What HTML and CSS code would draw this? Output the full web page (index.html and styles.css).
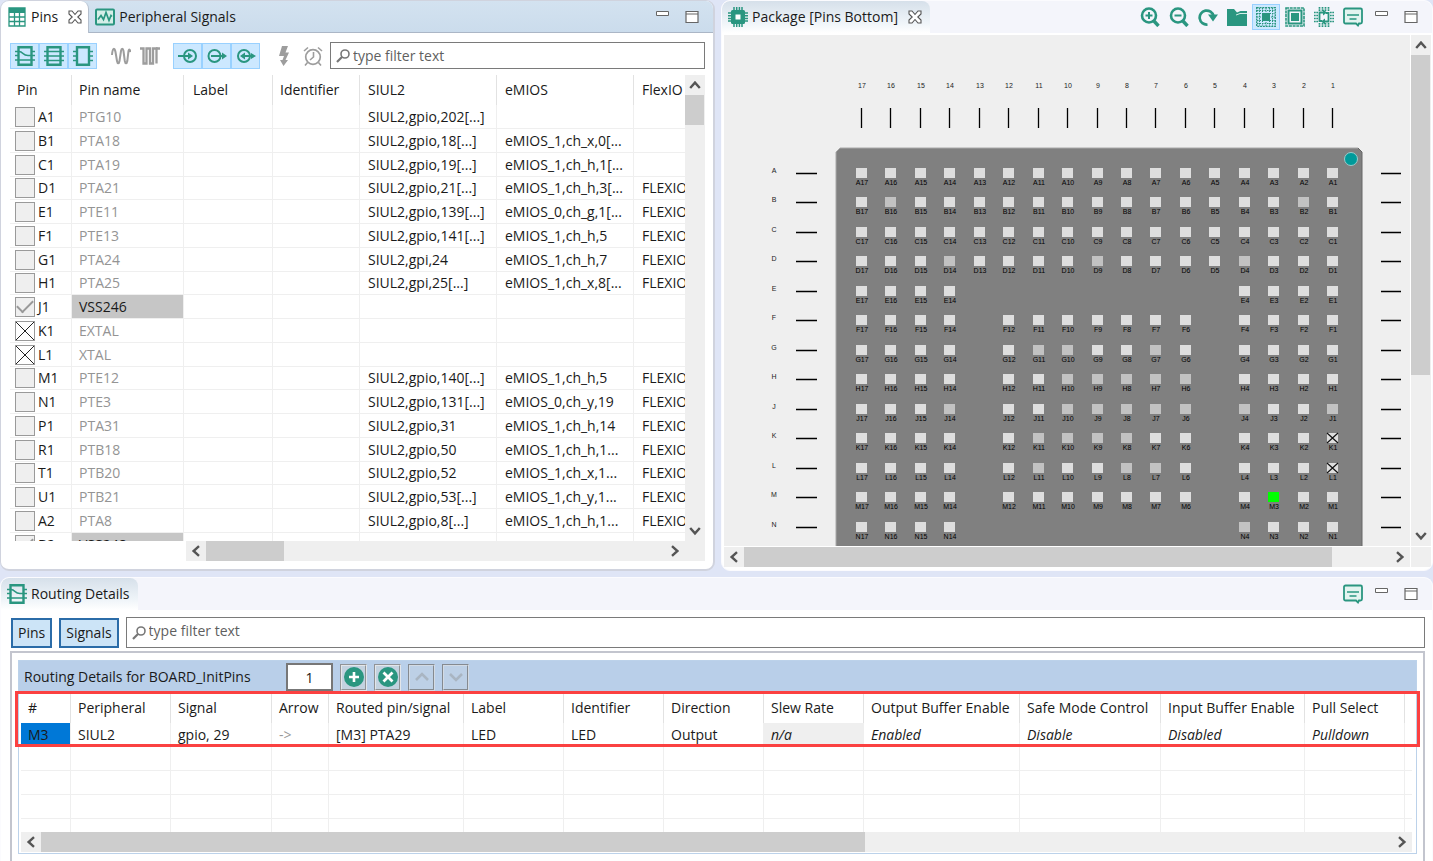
FILE: index.html
```html
<!DOCTYPE html>
<html lang="en">
<head>
<meta charset="utf-8">
<title>Pins</title>
<link rel="stylesheet" href="styles.css">
</head>
<body>
<svg class="sprite" aria-hidden="true">
  <symbol id="i-table" viewBox="0 0 18 20"><path d="M1 1h16v5H1z" fill="currentColor"/><path d="M1 1h16v18H1zM1 10h16M1 14.500h16M6.500 6v13M11.500 6v13" fill="none" stroke="currentColor" stroke-width="1.300"/></symbol>
  <symbol id="i-close" viewBox="0 0 14 14"><path d="M1 1h3l3 3.500L10 1h3v3L9.800 7 13 10v3h-3L7 9.500 4 13H1v-3l3.200-3L1 4z" fill="#fff" stroke="#555" stroke-width="1.100"/></symbol>
  <symbol id="i-wave" viewBox="0 0 20 17"><rect x="1" y="1" width="18" height="15" rx="1" fill="#d5eee8" stroke="currentColor" stroke-width="2"/><path d="M3 11l3-4 2.500 4L11 4l3 8 2-5 1 1" fill="none" stroke="currentColor" stroke-width="1.700"/></symbol>
  <symbol id="i-route" viewBox="0 0 20 20"><path d="M3.500 1.200h13v17.600h-13z" fill="none" stroke="currentColor" stroke-width="2.400"/><path d="M0 5.500h4q2 0 4 2T13 9.500h7M0 9.500h3M17 5.500h3M0 14h20" fill="none" stroke="currentColor" stroke-width="1.700"/></symbol>
  <symbol id="i-rows" viewBox="0 0 20 20"><path d="M3.500 1.200h13v17.600h-13z" fill="none" stroke="currentColor" stroke-width="2.400"/><path d="M0 5.500h20M0 10h3M17 10h3M3 10h14M0 14.500h20" fill="none" stroke="currentColor" stroke-width="1.500"/></symbol>
  <symbol id="i-chipbox" viewBox="0 0 20 20"><path d="M4 1.200h12v17.600H4z" fill="none" stroke="currentColor" stroke-width="2.400"/><path d="M0 5.500h3M0 10h3M0 14.500h3M17 5.500h3M17 10h3M17 14.500h3" stroke="currentColor" stroke-width="1.700"/></symbol>
  <symbol id="i-sine" viewBox="0 0 20 20"><path d="M1 9C1.500 2 3.500 1 4.500 6l1.500 9c.5 3 2 3 2.500 0L10 5c.5-3 2-3 2.500 0l1.300 10c.5 3 2 3 2.500 0L17.500 5C18 3 19 3 19.500 6" fill="none" stroke="currentColor" stroke-width="2"/></symbol>
  <symbol id="i-square" viewBox="0 0 20 20"><path d="M0 2.500h3.500v15h3v-15h3.500v15h3v-15h3.500v15" fill="none" stroke="currentColor" stroke-width="2.300"/><path d="M16 2.500h4" stroke="currentColor" stroke-width="2.300"/></symbol>
  <symbol id="i-in" viewBox="0 0 20 16"><circle cx="12" cy="8" r="6" fill="none" stroke="currentColor" stroke-width="2"/><path d="M0 8h12" stroke="currentColor" stroke-width="2"/><path d="M10 4.500l5 3.500-5 3.500z" fill="currentColor"/></symbol>
  <symbol id="i-out" viewBox="0 0 20 16"><circle cx="7.500" cy="8" r="6" fill="none" stroke="currentColor" stroke-width="2"/><path d="M4 8h13" stroke="currentColor" stroke-width="2"/><path d="M15 4.500l5 3.500-5 3.500z" fill="currentColor"/></symbol>
  <symbol id="i-inout" viewBox="0 0 20 16"><circle cx="8" cy="8" r="6" fill="none" stroke="currentColor" stroke-width="2"/><path d="M6 8h12" stroke="currentColor" stroke-width="2"/><path d="M15 5l5 3-5 3zM9 4.500L4 8l5 3.500z" fill="currentColor"/></symbol>
  <symbol id="i-flash" viewBox="0 0 12 20"><path d="M4 0h6L7.500 6.500H11L7.500 14H10l-4.500 6L2 14h2.500l1.500-4H1z" fill="currentColor"/></symbol>
  <symbol id="i-clock" viewBox="0 0 20 20"><circle cx="10" cy="11" r="7.300" fill="none" stroke="currentColor" stroke-width="1.700"/><path d="M10.500 6v5L7 14M1 5l4-3.500M19 5l-4-3.500M4.500 16.500L2 19.500M15.500 16.500l2.500 3" fill="none" stroke="currentColor" stroke-width="1.600"/></symbol>
  <symbol id="i-search" viewBox="0 0 14 14"><circle cx="9" cy="5" r="4" fill="none" stroke="currentColor" stroke-width="1.600"/><path d="M6.200 7.800L1 13" stroke="currentColor" stroke-width="2.200"/></symbol>
  <symbol id="i-min" viewBox="0 0 14 14"><path d="M.5 1.500h12v4H.5z" fill="#fff" stroke="#666"/></symbol>
  <symbol id="i-max" viewBox="0 0 14 14"><path d="M1 1.500h12v11H1zM1 4h12" fill="#fff" stroke="#666" stroke-width="1.200"/></symbol>
  <symbol id="i-chip" viewBox="0 0 20 20"><path d="M6 0v20M8.700 0v20M11.400 0v20M14 0v20M0 6h20M0 8.700h20M0 11.400h20M0 14h20" stroke="currentColor" stroke-width="1.500"/><rect x="3" y="3" width="14" height="14" rx="1.500" fill="currentColor"/><rect x="7.500" y="7.500" width="5" height="5" fill="#fff"/></symbol>
  <symbol id="i-zin" viewBox="0 0 20 20"><circle cx="9" cy="8.500" r="7" fill="none" stroke="currentColor" stroke-width="2.600"/><path d="M9 5v7M5.500 8.500h7" stroke="currentColor" stroke-width="2"/><path d="M13.500 13.500l5 5.500" stroke="currentColor" stroke-width="3.400"/></symbol>
  <symbol id="i-zout" viewBox="0 0 20 20"><circle cx="9" cy="8.500" r="7" fill="none" stroke="currentColor" stroke-width="2.600"/><path d="M5.500 8.500h7" stroke="currentColor" stroke-width="2"/><path d="M13.500 13.500l5 5.500" stroke="currentColor" stroke-width="3.400"/></symbol>
  <symbol id="i-rotate" viewBox="0 0 20 20"><path d="M9.500 17.500A7 7 0 1 1 15.500 9" fill="none" stroke="currentColor" stroke-width="2.700"/><path d="M10 7.500h10l-5 7z" fill="currentColor"/></symbol>
  <symbol id="i-folder" viewBox="0 0 20 20"><path d="M0 2h7l3 3.500 3.500-1.500H20v15H0z" fill="currentColor"/><path d="M9 8l4-1.500h7" fill="none" stroke="#d5eee8" stroke-width="1"/></symbol>
  <symbol id="i-bga" viewBox="0 0 20 20"><path d="M.7.7h18.600v18.600H.7z" fill="none" stroke="currentColor" stroke-width="1.300" stroke-dasharray="2 .8"/><path d="M3.500 1v18M16.500 1v18M1 3.500h18M1 16.500h18M10 1v4M10 15v4M1 10h4M15 10h4M6.500 1v18M13.500 1v18M1 6.500h18M1 13.500h18" fill="none" stroke="currentColor" stroke-width="1" stroke-dasharray="1.500 1"/><path d="M6 6h8v8H6z" fill="currentColor"/></symbol>
  <symbol id="i-pkg" viewBox="0 0 20 20"><path d="M1 1h18v18H1z" fill="none" stroke="currentColor" stroke-width="1.600" stroke-dasharray="3 .7"/><path d="M3.500 3.500h13v13h-13z" fill="none" stroke="currentColor" stroke-width="2"/><path d="M6 6h8v8H6z" fill="currentColor"/></symbol>
  <symbol id="i-dotchip" viewBox="0 0 20 20"><path d="M5.500 0v4M8.500 0v4M11.500 0v4M14.500 0v4M5.500 16v4M8.500 16v4M11.500 16v4M14.500 16v4M0 5.500h4M0 8.500h4M0 11.500h4M0 14.500h4M16 5.500h4M16 8.500h4M16 11.500h4M16 14.500h4" stroke="currentColor" stroke-width="1.700" stroke-dasharray="1.700 .6"/><path d="M10 5.500H5.500V14H8M10 14.500h4.500V6H12" fill="none" stroke="currentColor" stroke-width="1.800"/><path d="M9 2.500l4 3-4 3zM11 11.500l-4 3 4 3z" fill="currentColor"/></symbol>
  <symbol id="i-note" viewBox="0 0 20 19"><path d="M2.500 1h15A1.500 1.500 0 0 1 19 2.500v12A1.500 1.500 0 0 1 17.500 16H16l-1 2-2-2H2.500A1.500 1.500 0 0 1 1 14.500v-12A1.500 1.500 0 0 1 2.500 1z" fill="#e3f4f0" stroke="currentColor" stroke-width="1.800"/><path d="M4 7.500h12M6.500 11.500h7" stroke="currentColor" stroke-width="1.600"/></symbol>
  <symbol id="i-add" viewBox="0 0 20 20"><circle cx="10" cy="10" r="10" fill="currentColor"/><path d="M10 5v10M5 10h10" stroke="#fff" stroke-width="2.600"/></symbol>
  <symbol id="i-del" viewBox="0 0 20 20"><circle cx="10" cy="10" r="10" fill="currentColor"/><path d="M5.500 5.500l9 9M14.500 5.500l-9 9" stroke="#fff" stroke-width="2.800"/></symbol>
  <symbol id="i-up" viewBox="0 0 14 14"><path d="M1 10l6-6 6 6" fill="none" stroke="currentColor" stroke-width="2.600"/></symbol>
  <symbol id="i-down" viewBox="0 0 14 14"><path d="M1 4l6 6 6-6" fill="none" stroke="currentColor" stroke-width="2.600"/></symbol>
  <symbol id="i-sup" viewBox="0 0 10 10"><path d="M1 7.500l4-4.500 4 4.500" fill="none" stroke="currentColor" stroke-width="2"/></symbol>
  <symbol id="i-sdown" viewBox="0 0 10 10"><path d="M1 2.500L5 7l4-4.500" fill="none" stroke="currentColor" stroke-width="2"/></symbol>
  <symbol id="i-sleft" viewBox="0 0 10 10"><path d="M7.500 1L3 5l4.500 4" fill="none" stroke="currentColor" stroke-width="2"/></symbol>
  <symbol id="i-sright" viewBox="0 0 10 10"><path d="M2.500 1L7 5 2.500 9" fill="none" stroke="currentColor" stroke-width="2"/></symbol>
</svg>

<main class="workbench">
  <div class="top">
    <section class="panel panel-pins" aria-label="Pins">
      <div class="tabbar tabbar-focus">
        <button class="tab tab-active"><svg class="ic ic-tab"><use href="#i-table"/></svg><span>Pins</span><svg class="ic ic-close"><use href="#i-close"/></svg></button>
        <button class="tab tab-plain"><svg class="ic ic-tab"><use href="#i-wave"/></svg><span>Peripheral Signals</span></button>
        <div class="window-tools">
          <button class="tool" aria-label="Minimize"><svg class="ic ic-win"><use href="#i-min"/></svg></button>
          <button class="tool" aria-label="Maximize"><svg class="ic ic-win"><use href="#i-max"/></svg></button>
        </div>
      </div>
      <div class="filterbar">
        <div class="toggles">
          <button class="toggle on" aria-label="Show routed"><svg class="ic ic-20"><use href="#i-route"/></svg></button>
          <button class="toggle on" aria-label="Show not routed"><svg class="ic ic-20"><use href="#i-rows"/></svg></button>
          <button class="toggle on" aria-label="Show dedicated"><svg class="ic ic-20"><use href="#i-chipbox"/></svg></button>
        </div>
        <div class="toggles">
          <button class="toggle off" aria-label="Analog"><svg class="ic ic-20"><use href="#i-sine"/></svg></button>
          <button class="toggle off" aria-label="Digital"><svg class="ic ic-20"><use href="#i-square"/></svg></button>
        </div>
        <div class="toggles">
          <button class="toggle on" aria-label="Input"><svg class="ic ic-20"><use href="#i-in"/></svg></button>
          <button class="toggle on" aria-label="Output"><svg class="ic ic-20"><use href="#i-out"/></svg></button>
          <button class="toggle on" aria-label="Bidirectional"><svg class="ic ic-20"><use href="#i-inout"/></svg></button>
        </div>
        <div class="toggles">
          <button class="toggle off" aria-label="Power"><svg class="ic ic-20"><use href="#i-flash"/></svg></button>
          <button class="toggle off" aria-label="Timer"><svg class="ic ic-20"><use href="#i-clock"/></svg></button>
        </div>
        <label class="search"><svg class="ic ic-search"><use href="#i-search"/></svg><input type="text" placeholder="type filter text" aria-label="Filter pins"></label>
      </div>
      <div class="pins-area">
        <div class="viewport">
          <table class="grid pins">
            <colgroup><col class="c-pin"><col class="c-name"><col class="c-label"><col class="c-ident"><col class="c-fn"><col class="c-fn"><col></colgroup>
            <thead><tr><th>Pin</th><th>Pin name</th><th>Label</th><th>Identifier</th><th>SIUL2</th><th>eMIOS</th><th>FlexIO</th></tr></thead>
            <tbody id="pin-rows"></tbody>
          </table>
        </div>
        <div class="vbar">
          <button class="arrow" aria-label="Scroll up"><svg class="ic ic-arrow"><use href="#i-sup"/></svg></button>
          <div class="track"><div class="thumb thumb-pins-v"></div></div>
          <button class="arrow" aria-label="Scroll down"><svg class="ic ic-arrow"><use href="#i-sdown"/></svg></button>
        </div>
        <div class="hbar hbar-pins">
          <button class="arrow" aria-label="Scroll left"><svg class="ic ic-arrow"><use href="#i-sleft"/></svg></button>
          <div class="track"><div class="thumb thumb-pins-h"></div></div>
          <button class="arrow" aria-label="Scroll right"><svg class="ic ic-arrow"><use href="#i-sright"/></svg></button>
        </div>
        <div class="corner"></div>
      </div>
    </section>

    <section class="panel panel-package" aria-label="Package">
      <div class="tabbar">
        <button class="tab tab-soft"><svg class="ic ic-tab"><use href="#i-chip"/></svg><span>Package [Pins Bottom]</span><svg class="ic ic-close"><use href="#i-close"/></svg></button>
        <div class="window-tools">
          <button class="tool" aria-label="Zoom in"><svg class="ic ic-20"><use href="#i-zin"/></svg></button>
          <button class="tool" aria-label="Zoom out"><svg class="ic ic-20"><use href="#i-zout"/></svg></button>
          <button class="tool" aria-label="Rotate"><svg class="ic ic-20"><use href="#i-rotate"/></svg></button>
          <button class="tool" aria-label="Open"><svg class="ic ic-20"><use href="#i-folder"/></svg></button>
          <button class="tool tool-on" aria-label="Bottom view"><svg class="ic ic-20"><use href="#i-bga"/></svg></button>
          <button class="tool" aria-label="Top view"><svg class="ic ic-20"><use href="#i-pkg"/></svg></button>
          <button class="tool" aria-label="Resources"><svg class="ic ic-20"><use href="#i-dotchip"/></svg></button>
          <button class="tool" aria-label="Legend"><svg class="ic ic-20"><use href="#i-note"/></svg></button>
          <button class="tool" aria-label="Minimize"><svg class="ic ic-win"><use href="#i-min"/></svg></button>
          <button class="tool" aria-label="Maximize"><svg class="ic ic-win"><use href="#i-max"/></svg></button>
        </div>
      </div>
      <div class="package-area">
        <div class="canvas"><svg id="package" class="package" width="686" height="620" role="img" aria-label="Package pin map"></svg></div>
        <div class="vbar">
          <button class="arrow" aria-label="Scroll up"><svg class="ic ic-arrow"><use href="#i-sup"/></svg></button>
          <div class="track"><div class="thumb thumb-pkg-v"></div></div>
          <button class="arrow" aria-label="Scroll down"><svg class="ic ic-arrow"><use href="#i-sdown"/></svg></button>
        </div>
        <div class="hbar">
          <button class="arrow" aria-label="Scroll left"><svg class="ic ic-arrow"><use href="#i-sleft"/></svg></button>
          <div class="track"><div class="thumb thumb-pkg-h"></div></div>
          <button class="arrow" aria-label="Scroll right"><svg class="ic ic-arrow"><use href="#i-sright"/></svg></button>
        </div>
        <div class="corner"></div>
      </div>
    </section>
  </div>

  <section class="panel panel-routing" aria-label="Routing Details">
    <div class="tabbar">
      <button class="tab tab-soft"><svg class="ic ic-tab"><use href="#i-route"/></svg><span>Routing Details</span></button>
      <div class="window-tools">
        <button class="tool" aria-label="Legend"><svg class="ic ic-20"><use href="#i-note"/></svg></button>
        <button class="tool" aria-label="Minimize"><svg class="ic ic-win"><use href="#i-min"/></svg></button>
        <button class="tool" aria-label="Maximize"><svg class="ic ic-win"><use href="#i-max"/></svg></button>
      </div>
    </div>
    <div class="routing-filter">
      <button class="pressed">Pins</button>
      <button class="pressed">Signals</button>
      <label class="search"><svg class="ic ic-search"><use href="#i-search"/></svg><input type="text" placeholder="type filter text" aria-label="Filter routing"></label>
    </div>
    <div class="routing-frame">
      <div class="routing-box">
        <div class="routing-head">
          <label for="count" class="routing-title">Routing Details for BOARD_InitPins</label>
          <input id="count" class="count" type="text" value="1">
          <button class="square" aria-label="Add"><svg class="ic ic-20"><use href="#i-add"/></svg></button>
          <button class="square" aria-label="Remove"><svg class="ic ic-20"><use href="#i-del"/></svg></button>
          <button class="square dim" aria-label="Move up"><svg class="ic ic-move"><use href="#i-up"/></svg></button>
          <button class="square dim" aria-label="Move down"><svg class="ic ic-move"><use href="#i-down"/></svg></button>
        </div>
        <div class="routing-body">
          <div class="highlight"></div>
          <div class="viewport">
            <table class="grid routing">
              <colgroup><col class="r-50"><col class="r-100"><col class="r-101"><col class="r-57"><col class="r-135"><col class="r-100"><col class="r-100"><col class="r-100"><col class="r-100"><col class="r-156"><col class="r-141"><col class="r-144"><col class="r-100"><col></colgroup>
              <thead><tr><th>#</th><th>Peripheral</th><th>Signal</th><th>Arrow</th><th>Routed pin/signal</th><th>Label</th><th>Identifier</th><th>Direction</th><th>Slew Rate</th><th>Output Buffer Enable</th><th>Safe Mode Control</th><th>Input Buffer Enable</th><th>Pull Select</th><th></th></tr></thead>
              <tbody>
                <tr><td class="selected">M3</td><td>SIUL2</td><td>gpio, 29</td><td class="muted">-&gt;</td><td>[M3] PTA29</td><td>LED</td><td>LED</td><td>Output</td><td class="na">n/a</td><td class="em">Enabled</td><td class="em">Disable</td><td class="em">Disabled</td><td class="em">Pulldown</td><td></td></tr>
                <tr><td></td><td></td><td></td><td></td><td></td><td></td><td></td><td></td><td></td><td></td><td></td><td></td><td></td><td></td></tr>
                <tr><td></td><td></td><td></td><td></td><td></td><td></td><td></td><td></td><td></td><td></td><td></td><td></td><td></td><td></td></tr>
                <tr><td></td><td></td><td></td><td></td><td></td><td></td><td></td><td></td><td></td><td></td><td></td><td></td><td></td><td></td></tr>
                <tr><td></td><td></td><td></td><td></td><td></td><td></td><td></td><td></td><td></td><td></td><td></td><td></td><td></td><td></td></tr>
              </tbody>
            </table>
          </div>
          <div class="hbar">
            <button class="arrow" aria-label="Scroll left"><svg class="ic ic-arrow"><use href="#i-sleft"/></svg></button>
            <div class="track"><div class="thumb thumb-routing"></div></div>
            <button class="arrow" aria-label="Scroll right"><svg class="ic ic-arrow"><use href="#i-sright"/></svg></button>
          </div>
        </div>
      </div>
    </div>
  </section>
</main>
<script src="app.js"></script>
</body>
</html>
```

FILE: styles.css
```css
* { box-sizing: border-box; }

body {
  margin: 0;
  background: #dfe5f6;
  color: #1a1a1a;
  font: 14px/20px "Open Sans", "Noto Sans", sans-serif;
}

button, input { font: inherit; color: inherit; margin: 0; }
button { padding: 0; border: 0; background: none; }

.sprite { position: absolute; width: 0; height: 0; }
.ic { display: block; flex: none; color: #2a9680; }
.ic-20, .ic-tab { width: 20px; height: 20px; }
.ic-close { width: 14px; height: 14px; }
.ic-win { width: 14px; height: 14px; }
.ic-search { width: 14px; height: 14px; color: #777; }
.ic-move { width: 14px; height: 14px; color: #a9b5c2; }
.ic-arrow { width: 12px; height: 12px; color: #555; }

.workbench {
  display: grid;
  grid-template-rows: 571fr 284fr;
  gap: 6px;
  height: 100vh;
  min-height: 600px;
  overflow: hidden;
}

.top {
  display: grid;
  grid-template-columns: 715fr 712fr;
  gap: 6px;
  min-height: 0;
}

.panel {
  display: flex;
  flex-direction: column;
  min-width: 0;
  min-height: 0;
  background: #fff;
  border: 1px solid #fbfbfe;
  border-radius: 9px;
  overflow: hidden;
}
.panel-pins { border: 2px solid #d0d3de; border-top-width: 1px; border-left-width: 1px; }
.panel-routing { border-bottom: 0; border-radius: 9px 9px 0 0; }

.tabbar {
  display: flex;
  flex: none;
  height: 32px;
  background: #f4f5fb;
}
.tabbar-focus {
  background: linear-gradient(#d3e2f0, #cbdcec);
  border-bottom: 1px solid #abb6c6;
}
.tab { display: flex; align-items: center; gap: 4px; height: 32px; padding: 0 6px; }
.tab-active { background: #fff; border-right: 1px solid #b5bfcd; border-radius: 8px 8px 0 0; }
.tab-active .ic-close, .tab-soft .ic-close { margin-left: 6px; }
.tab-soft { padding-right: 8px; border-radius: 8px 8px 0 0; background: linear-gradient(#d6e0ea, #f0f5f9 70%, #fff); }

.window-tools { display: flex; align-items: center; gap: 1px; margin-left: auto; padding-right: 7px; }
.tool { display: grid; place-items: center; width: 28px; height: 26px; }
.tool-on { background: #cce8ff; border: 1px solid #99d1ff; }

.filterbar { display: flex; align-items: center; gap: 3px; padding: 9px 8px 6px 9px; }
.toggles { display: flex; }
.toggle { display: grid; place-items: center; width: 29px; height: 26px; }
.toggle.on { background: #cce8ff; border: 1px solid #99d1ff; }
.toggle.off .ic { color: #9d9d9d; }
.toggles + .toggles { margin-left: 6px; }

.search {
  display: flex;
  flex: 1;
  align-items: center;
  gap: 3px;
  height: 27px;
  min-width: 0;
  padding-left: 5px;
  border: 1px solid #7a7a7a;
  background: #fff;
}
.search input { flex: 1; min-width: 0; padding: 0; border: 0; outline: 0; background: none; }
.search input::placeholder { color: #5f5f5f; opacity: 1; }

.pins-area {
  display: grid;
  flex: 1;
  grid-template: 1fr 20px / 1fr 20px;
  min-height: 0;
  padding: 0 8px 8px 9px;
}
.package-area {
  display: grid;
  flex: 1;
  grid-template: 1fr 20px / 1fr 20px;
  gap: 1px;
  min-height: 0;
  padding: 2px 1px 3px 2px;
}
.viewport { min-width: 0; min-height: 0; overflow: hidden; }

.vbar, .hbar { display: flex; background: #efefef; }
.vbar { flex-direction: column; }
.hbar { height: 20px; }
.hbar-pins { margin-left: 176px; }
.corner { background: #efefef; }
.arrow { display: grid; flex: none; place-items: center; width: 20px; height: 20px; }
.track { flex: 1; min-width: 0; min-height: 0; }
.thumb { width: 100%; height: 100%; background: #cdcdcd; }
.thumb-pins-v { width: 19px; height: 7%; }
.thumb-pins-h { width: 17%; }
.thumb-pkg-v { width: 19px; height: 68%; }
.thumb-pkg-h { width: 91%; }
.thumb-routing { width: 61%; }

.grid { width: 100%; table-layout: fixed; border-collapse: separate; border-spacing: 0; }
.grid th, .grid td {
  height: inherit;
  padding: 0 0 0 7px;
  overflow: hidden;
  border-right: 1px solid #efefef;
  font-weight: normal;
  text-align: left;
  white-space: nowrap;
}
.grid td { border-bottom: 1px solid #efefef; }
.grid th { border-color: #e2e2e2; }
.grid th:last-child, .grid td:last-child { border-right: 0; }
.grid thead tr { height: 30px; }
.grid tbody tr { height: 24px; }

.c-pin { width: 62px; }
.c-name { width: 112px; }
.c-label { width: 89px; }
.c-ident { width: 87px; }
.c-fn { width: 137px; }
.pins tbody tr:nth-child(4n) { height: 23px; }
.pins tbody td:first-child { padding-left: 5px; }
.pins th:nth-child(3) { padding-left: 9px; }
.pins th:nth-child(n+5), .pins td:nth-child(n+5) { padding-left: 8px; }
.pins td:nth-child(2) { color: #949494; }
.pins td.fixed { background: #c6c6c6; color: #1a1a1a; }
.pin { display: flex; align-items: center; gap: 3px; height: 20px; }
.pin input {
  display: grid;
  flex: none;
  place-items: center;
  width: 20px;
  height: 20px;
  appearance: none;
  background: #efefef;
  border: 1px solid #9a9a9a;
}
.pin input:checked::before {
  content: "";
  width: 14px;
  height: 7px;
  margin-bottom: 4px;
  border: solid #999;
  border-width: 0 0 2px 2px;
  rotate: -45deg;
}
.pin input.blocked {
  background:
    linear-gradient(45deg, transparent 48%, #222 48% 52%, transparent 52%),
    linear-gradient(-45deg, transparent 48%, #222 48% 52%, transparent 52%),
    #fff;
}

.canvas { min-width: 0; min-height: 0; overflow: hidden; background: #efefef; }
.package { display: block; font: 7px "Liberation Sans", Arial, sans-serif; text-anchor: middle; }

.routing-filter { display: flex; align-items: center; gap: 7px; padding: 7px 7px 3px 10px; }
.routing-filter .search { height: 31px; }
.routing-filter .search input { padding-bottom: 3px; }
.pressed { height: 30px; padding: 0 5px; background: #cce4f7; border: 2px solid #2b6ca8; }

.routing-frame {
  flex: 1;
  min-height: 0;
  margin: 0 7px 0 9px;
  padding: 7px 6px;
  border: 2px solid #c3c5ce;
  border-bottom: 0;
}
.routing-box { display: flex; flex-direction: column; height: 100%; border: 1px solid #bcd2ea; }
.routing-head { display: flex; flex: none; align-items: center; gap: 7px; height: 32px; padding-left: 5px; background: #b9cfe9; }
.routing-title { width: 255px; }
.count { width: 47px; height: 28px; padding: 0; text-align: center; background: #fff; border: 2px solid #777; outline: 0; }
.square { display: grid; place-items: center; width: 27px; height: 27px; background: #c3d2e0; border: 2px groove #e3e6ea; }
.square.dim { background: #bdd0e6; border-color: #d3dbe4; }

.routing-body { position: relative; display: flex; flex: 1; flex-direction: column; min-height: 0; padding: 0 4px 1px 2px; }
.routing-body .viewport { flex: 1; }
.highlight {
  position: absolute;
  top: -2px;
  right: -4px;
  left: -4px;
  height: 56px;
  border: 3px solid #fb4141;
  pointer-events: none;
}
.r-50 { width: 50px; }
.r-57 { width: 57px; }
.r-100 { width: 100px; }
.r-101 { width: 101px; }
.r-135 { width: 135px; }
.r-141 { width: 141px; }
.r-144 { width: 144px; }
.r-156 { width: 156px; }
.grid td.selected { background: #0078d7; }
.grid td.muted { color: #9a9a9a; }
.grid td.na { background: #efefef; font-style: italic; }
.grid td.em { font-style: italic; }
```

FILE: app.js
```js
const pins = [
  ["A1", "PTG10", "SIUL2,gpio,202[...]", "", ""],
  ["B1", "PTA18", "SIUL2,gpio,18[...]", "eMIOS_1,ch_x,0[...", ""],
  ["C1", "PTA19", "SIUL2,gpio,19[...]", "eMIOS_1,ch_h,1[...", ""],
  ["D1", "PTA21", "SIUL2,gpio,21[...]", "eMIOS_1,ch_h,3[...", "FLEXIO"],
  ["E1", "PTE11", "SIUL2,gpio,139[...]", "eMIOS_0,ch_g,1[...", "FLEXIO"],
  ["F1", "PTE13", "SIUL2,gpio,141[...]", "eMIOS_1,ch_h,5", "FLEXIO"],
  ["G1", "PTA24", "SIUL2,gpi,24", "eMIOS_1,ch_h,7", "FLEXIO"],
  ["H1", "PTA25", "SIUL2,gpi,25[...]", "eMIOS_1,ch_x,8[...", "FLEXIO"],
  ["J1", "VSS246", "", "", "", "fixed"],
  ["K1", "EXTAL", "", "", "", "blocked"],
  ["L1", "XTAL", "", "", "", "blocked"],
  ["M1", "PTE12", "SIUL2,gpio,140[...]", "eMIOS_1,ch_h,5", "FLEXIO"],
  ["N1", "PTE3", "SIUL2,gpio,131[...]", "eMIOS_0,ch_y,19", "FLEXIO"],
  ["P1", "PTA31", "SIUL2,gpio,31", "eMIOS_1,ch_h,14", "FLEXIO"],
  ["R1", "PTB18", "SIUL2,gpio,50", "eMIOS_1,ch_h,1...", "FLEXIO"],
  ["T1", "PTB20", "SIUL2,gpio,52", "eMIOS_1,ch_x,1...", "FLEXIO"],
  ["U1", "PTB21", "SIUL2,gpio,53[...]", "eMIOS_1,ch_y,1...", "FLEXIO"],
  ["A2", "PTA8", "SIUL2,gpio,8[...]", "eMIOS_1,ch_h,1...", "FLEXIO"],
  ["B2", "VSS248", "", "", "", "fixed"]
];

document.getElementById("pin-rows").innerHTML = pins.map(([pin, name, siul, emios, flex, state]) => `
  <tr>
    <td><label class="pin"><input type="checkbox"${state === "fixed" ? " checked" : ""}${state === "blocked" ? ' class="blocked"' : ""}>${pin}</label></td>
    <td${state === "fixed" ? ' class="fixed"' : ""}>${name}</td>
    <td></td><td></td><td>${siul}</td><td>${emios}</td><td>${flex}</td>
  </tr>`).join("");

// Ball grid of the package, seen from the bottom.
const rows = "ABCDEFGHJKLMN".split("");
const power = new Set("B16 B2 D14 D9 D4 G11 G10 G7 H10 H9 H8 H7 H6 J14 J10 J9 J8 J7 J6 J4 J1 K11 K10 K9 K8 L11 L8 L7 N4".split(" "));
const blocked = new Set(["K1", "L1"]);
const routed = new Set(["M3"]);
const colX = n => Math.round(137 + 29.44 * (17 - n));
const rowY = i => Math.round(138 + 29.46 * i);

function hasBall(row, col) {
  if (col >= 14 || col <= 4) return true;
  if ("ABCD".includes(row)) return true;
  return "FGHJKLM".includes(row) && col >= 6 && col <= 12;
}

let svg = `<path d="M116 113h518l4 4v520H112V117z" fill="#808080"/>
  <path d="M112 637V117l4-4h518" fill="none" stroke="#a8a8a8"/>
  <path d="M634 113l4 4v520" fill="none" stroke="#666"/>
  <circle cx="627" cy="124" r="6.500" fill="#009a9a" stroke="#9cc"/>`;

for (let col = 17; col >= 1; col--) {
  svg += `<text x="${colX(col) + 1}" y="53" fill="#222">${col}</text>
    <path d="M${colX(col) + 0.5} 73v20" stroke="#000" stroke-width="1.300"/>`;
}
rows.forEach((row, i) => {
  const y = rowY(i);
  svg += `<text x="50" y="${y}" fill="#222">${row}</text>
    <path d="M72 ${y + 0.5}h21M657 ${y + 0.5}h20" stroke="#000" stroke-width="1.300"/>`;
  for (let col = 17; col >= 1; col--) {
    if (!hasBall(row, col)) continue;
    const id = row + col;
    const x = colX(col);
    const fill = routed.has(id) ? "#00ff00" : power.has(id) ? "#c2c2c2" : "#dedede";
    svg += `<rect x="${x - 5}" y="${y - 5}" width="11" height="10" fill="${fill}"/>
      <text x="${x + 1}" y="${y + 12}" fill="#000">${id}</text>`;
    if (blocked.has(id)) {
      svg += `<path d="M${x - 5} ${y - 5}l11 10M${x + 6} ${y - 5}l-11 10" stroke="#111" stroke-width="1.200"/>`;
    }
  }
});
document.getElementById("package").innerHTML = svg;
```
